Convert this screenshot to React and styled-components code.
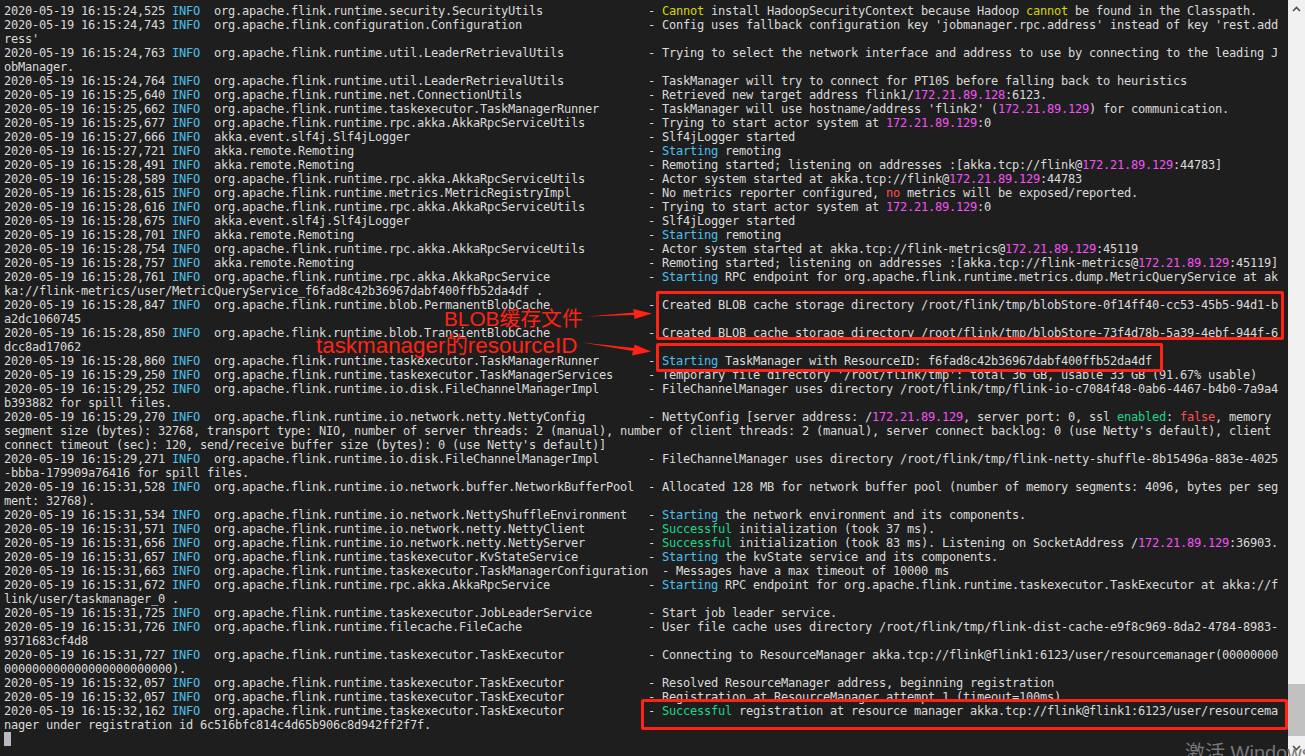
import React from "react";
import styled, { createGlobalStyle } from "styled-components";

const DAY = "2020-05-19 16:15:";
const RPC_UTILS = "org.apache.flink.runtime.rpc.akka.AkkaRpcServiceUtils";
const RETRIEVAL = "org.apache.flink.runtime.util.LeaderRetrievalUtils";
const LOGGER = "akka.event.slf4j.Slf4jLogger";
const REMOTING = "akka.remote.Remoting";
const RPC_SERVICE = "org.apache.flink.runtime.rpc.akka.AkkaRpcService";
const EXECUTOR = "org.apache.flink.runtime.taskexecutor.TaskExecutor";
const CHANNELS = "org.apache.flink.runtime.io.disk.FileChannelManagerImpl";

// time, logger, message, then whatever the terminal wrapped onto the next rows
const entries = [
  ["24,525", "org.apache.flink.runtime.security.SecurityUtils", "Cannot install HadoopSecurityContext because Hadoop cannot be found in the Classpath."],
  ["24,743", "org.apache.flink.configuration.Configuration", "Config uses fallback configuration key 'jobmanager.rpc.address' instead of key 'rest.add", "ress'"],
  ["24,763", RETRIEVAL, "Trying to select the network interface and address to use by connecting to the leading J", "obManager."],
  ["24,764", RETRIEVAL, "TaskManager will try to connect for PT10S before falling back to heuristics"],
  ["25,640", "org.apache.flink.runtime.net.ConnectionUtils", "Retrieved new target address flink1/172.21.89.128:6123."],
  ["25,662", "org.apache.flink.runtime.taskexecutor.TaskManagerRunner", "TaskManager will use hostname/address 'flink2' (172.21.89.129) for communication."],
  ["25,677", RPC_UTILS, "Trying to start actor system at 172.21.89.129:0"],
  ["27,666", LOGGER, "Slf4jLogger started"],
  ["27,721", REMOTING, "Starting remoting"],
  ["28,491", REMOTING, "Remoting started; listening on addresses :[akka.tcp://flink@172.21.89.129:44783]"],
  ["28,589", RPC_UTILS, "Actor system started at akka.tcp://flink@172.21.89.129:44783"],
  ["28,615", "org.apache.flink.runtime.metrics.MetricRegistryImpl", "No metrics reporter configured, no metrics will be exposed/reported."],
  ["28,616", RPC_UTILS, "Trying to start actor system at 172.21.89.129:0"],
  ["28,675", LOGGER, "Slf4jLogger started"],
  ["28,701", REMOTING, "Starting remoting"],
  ["28,754", RPC_UTILS, "Actor system started at akka.tcp://flink-metrics@172.21.89.129:45119"],
  ["28,757", REMOTING, "Remoting started; listening on addresses :[akka.tcp://flink-metrics@172.21.89.129:45119]"],
  ["28,761", RPC_SERVICE, "Starting RPC endpoint for org.apache.flink.runtime.metrics.dump.MetricQueryService at ak", "ka://flink-metrics/user/MetricQueryService_f6fad8c42b36967dabf400ffb52da4df ."],
  ["28,847", "org.apache.flink.runtime.blob.PermanentBlobCache", "Created BLOB cache storage directory /root/flink/tmp/blobStore-0f14ff40-cc53-45b5-94d1-b", "a2dc1060745"],
  ["28,850", "org.apache.flink.runtime.blob.TransientBlobCache", "Created BLOB cache storage directory /root/flink/tmp/blobStore-73f4d78b-5a39-4ebf-944f-6", "dcc8ad17062"],
  ["28,860", "org.apache.flink.runtime.taskexecutor.TaskManagerRunner", "Starting TaskManager with ResourceID: f6fad8c42b36967dabf400ffb52da4df"],
  ["29,250", "org.apache.flink.runtime.taskexecutor.TaskManagerServices", "Temporary file directory '/root/flink/tmp': total 36 GB, usable 33 GB (91.67% usable)"],
  ["29,252", CHANNELS, "FileChannelManager uses directory /root/flink/tmp/flink-io-c7084f48-0ab6-4467-b4b0-7a9a4", "b393882 for spill files."],
  ["29,270", "org.apache.flink.runtime.io.network.netty.NettyConfig", "NettyConfig [server address: /172.21.89.129, server port: 0, ssl enabled: false, memory", "segment size (bytes): 32768, transport type: NIO, number of server threads: 2 (manual), number of client threads: 2 (manual), server connect backlog: 0 (use Netty's default), client", "connect timeout (sec): 120, send/receive buffer size (bytes): 0 (use Netty's default)]"],
  ["29,271", CHANNELS, "FileChannelManager uses directory /root/flink/tmp/flink-netty-shuffle-8b15496a-883e-4025", "-bbba-179909a76416 for spill files."],
  ["31,528", "org.apache.flink.runtime.io.network.buffer.NetworkBufferPool", "Allocated 128 MB for network buffer pool (number of memory segments: 4096, bytes per seg", "ment: 32768)."],
  ["31,534", "org.apache.flink.runtime.io.network.NettyShuffleEnvironment", "Starting the network environment and its components."],
  ["31,571", "org.apache.flink.runtime.io.network.netty.NettyClient", "Successful initialization (took 37 ms)."],
  ["31,656", "org.apache.flink.runtime.io.network.netty.NettyServer", "Successful initialization (took 83 ms). Listening on SocketAddress /172.21.89.129:36903."],
  ["31,657", "org.apache.flink.runtime.taskexecutor.KvStateService", "Starting the kvState service and its components."],
  ["31,663", "org.apache.flink.runtime.taskexecutor.TaskManagerConfiguration", "Messages have a max timeout of 10000 ms"],
  ["31,672", RPC_SERVICE, "Starting RPC endpoint for org.apache.flink.runtime.taskexecutor.TaskExecutor at akka://f", "link/user/taskmanager_0 ."],
  ["31,725", "org.apache.flink.runtime.taskexecutor.JobLeaderService", "Start job leader service."],
  ["31,726", "org.apache.flink.runtime.filecache.FileCache", "User file cache uses directory /root/flink/tmp/flink-dist-cache-e9f8c969-8da2-4784-8983-", "9371683cf4d8"],
  ["31,727", EXECUTOR, "Connecting to ResourceManager akka.tcp://flink@flink1:6123/user/resourcemanager(00000000", "000000000000000000000000)."],
  ["32,057", EXECUTOR, "Resolved ResourceManager address, beginning registration"],
  ["32,057", EXECUTOR, "Registration at ResourceManager attempt 1 (timeout=100ms)."],
  ["32,162", EXECUTOR, "Successful registration at resource manager akka.tcp://flink@flink1:6123/user/resourcema", "nager under registration id 6c516bfc814c4d65b906c8d942ff2f7f."],
];

const kinds = {
  INFO: "info",
  Starting: "info",
  Successful: "good",
  enabled: "good",
  Cannot: "warn",
  cannot: "warn",
  false: "bad",
  no: "bad",
};

const palette = {
  info: "#4cc0ea",
  good: "#17d98a",
  warn: "#d7d700",
  bad: "#ff4f4f",
  ip: "#f552f5",
};

const TOKENS = /(\b\d+\.\d+\.\d+\.\d+\b|\bINFO\b|\bStarting\b|\bSuccessful\b|\bCannot\b|\bcannot\b|\benabled\b|\bfalse\b|\bno\b)/;

const paint = (text) =>
  text.split(TOKENS).map((part, i) =>
    i % 2 ? <Mark key={i} $kind={kinds[part] || "ip"}>{part}</Mark> : part
  );

const GlobalStyle = createGlobalStyle`
  html, body {
    margin: 0;
    padding: 0;
    background: #1e1e1e;
  }
`;

const Terminal = styled.div`
  position: relative;
  display: flex;
  width: 1305px;
  height: 756px;
  overflow: hidden;
  background: #1e1e1e;
`;

const LogPane = styled.div`
  flex: 1;
  min-width: 0;
  padding: 4px 0 0 4px;
  font-family: "DejaVu Sans Mono", monospace;
  font-size: 12px;
  letter-spacing: -0.225px;
  line-height: 14px;
  color: #dadada;
`;

const Row = styled.div`
  height: 14px;
  white-space: pre;
`;

const Mark = styled.span`
  color: ${(p) => palette[p.$kind]};
`;

const Cursor = styled.div`
  width: 7px;
  height: 14px;
  background: #b9b9c2;
`;

const Scrollbar = styled.div`
  flex: 0 0 17px;
  display: flex;
  flex-direction: column;
  background: #f1f1f1;
`;

const ScrollButton = styled.div`
  flex: 0 0 17px;
  display: flex;
  align-items: center;
  justify-content: center;
`;

const ScrollTrack = styled.div`
  flex: 1;
  display: flex;
  flex-direction: column;
  justify-content: flex-end;
  padding-bottom: 3px;
`;

const ScrollThumb = styled.div`
  height: 52px;
  background: #c1c1c1;
`;

const RedBox = styled.div`
  position: absolute;
  box-sizing: border-box;
  border: 3px solid #ff2316;
  border-radius: 2px;
`;

const BlobBox = styled(RedBox)`
  left: 656px;
  top: 291px;
  width: 628px;
  height: 49px;
`;

const ResourceBox = styled(RedBox)`
  left: 656px;
  top: 343px;
  width: 507px;
  height: 29px;
`;

const RegistrationBox = styled(RedBox)`
  left: 641px;
  top: 699px;
  width: 647px;
  height: 31px;
`;

const Note = styled.div`
  position: absolute;
  font-family: "Liberation Sans", "Noto Sans CJK SC", sans-serif;
  line-height: 24px;
  color: #ff2316;
  white-space: nowrap;
`;

const BlobNote = styled(Note)`
  left: 444px;
  top: 307px;
  font-size: 20.8px;
`;

const ResourceNote = styled(Note)`
  left: 316px;
  top: 334px;
  font-size: 22.4px;
`;

const Arrows = styled.svg`
  position: absolute;
  left: 0;
  top: 0;
  pointer-events: none;
`;

const Watermark = styled.div`
  position: absolute;
  left: 1185px;
  top: 741px;
  font-family: "Liberation Sans", "Noto Sans CJK SC", sans-serif;
  font-size: 20px;
  line-height: 24px;
  color: #77777c;
  white-space: nowrap;
`;

const head = (time, logger, message) =>
  `${DAY}${time} INFO  ${logger.padEnd(logger.length >= 62 ? 64 : 62)}- ${message}`;

const App = () => {
  return (
    <Terminal>
      <GlobalStyle />
      <LogPane>
        {entries.map(([time, logger, message, ...wrapped], i) => (
          <React.Fragment key={i}>
            <Row>{paint(head(time, logger, message))}</Row>
            {wrapped.map((line, j) => (
              <Row key={j}>{paint(line)}</Row>
            ))}
          </React.Fragment>
        ))}
        <Cursor />
      </LogPane>
      <Scrollbar>
        <ScrollButton>
          <svg width="9" height="6" viewBox="0 0 9 6">
            <path d="M1 5 L4.5 1.5 L8 5" fill="none" stroke="#505050" strokeWidth="1.6" />
          </svg>
        </ScrollButton>
        <ScrollTrack>
          <ScrollThumb />
        </ScrollTrack>
        <ScrollButton>
          <svg width="9" height="6" viewBox="0 0 9 6">
            <path d="M1 1 L4.5 4.5 L8 1" fill="none" stroke="#505050" strokeWidth="1.6" />
          </svg>
        </ScrollButton>
      </Scrollbar>
      <BlobBox />
      <ResourceBox />
      <RegistrationBox />
      <BlobNote>BLOB缓存文件</BlobNote>
      <ResourceNote>taskmanager的resourceID</ResourceNote>
      <Arrows width="1305" height="756" viewBox="0 0 1305 756">
        <path d="M587 316.5 L634 312.5 L633 309 L652 313.5 L634.5 319 L634 315 Z" fill="#ff2316" />
        <path d="M582 342.5 L634 348 L634.5 344.5 L651 351.5 L632 355.5 L633 351 Z" fill="#ff2316" />
      </Arrows>
      <Watermark>激活 Windows</Watermark>
    </Terminal>
  );
};

export default App;
